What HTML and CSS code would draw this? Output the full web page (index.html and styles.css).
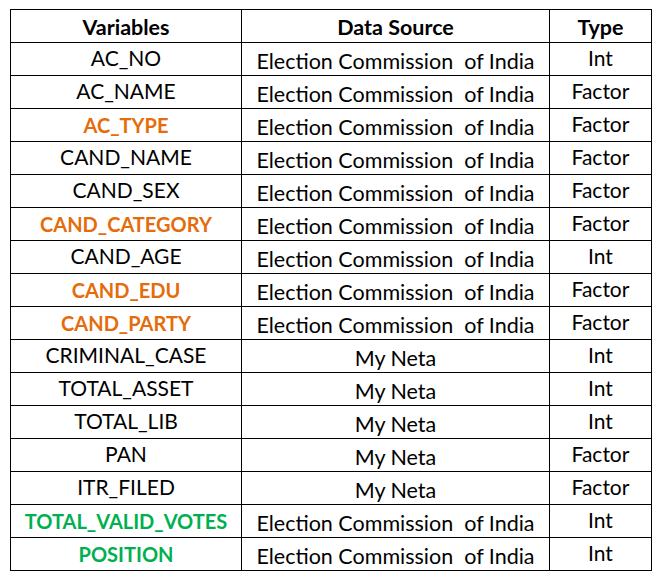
FILE: index.html
```html
<!DOCTYPE html>
<html>
<head>
<meta charset="utf-8">
<link rel="stylesheet" href="styles.css">
</head>
<body>
<div class="table">
  <div class="cell head c1">Variables</div><div class="cell head c2">Data Source</div><div class="cell head c3">Type</div>
  <div class="cell c1">AC_NO</div><div class="cell c2">Election Commission  of India</div><div class="cell c3">Int</div>
  <div class="cell c1">AC_NAME</div><div class="cell c2">Election Commission  of India</div><div class="cell c3">Factor</div>
  <div class="cell c1 orange">AC_TYPE</div><div class="cell c2">Election Commission  of India</div><div class="cell c3">Factor</div>
  <div class="cell c1">CAND_NAME</div><div class="cell c2">Election Commission  of India</div><div class="cell c3">Factor</div>
  <div class="cell c1">CAND_SEX</div><div class="cell c2">Election Commission  of India</div><div class="cell c3">Factor</div>
  <div class="cell c1 orange">CAND_CATEGORY</div><div class="cell c2">Election Commission  of India</div><div class="cell c3">Factor</div>
  <div class="cell c1">CAND_AGE</div><div class="cell c2">Election Commission  of India</div><div class="cell c3">Int</div>
  <div class="cell c1 orange">CAND_EDU</div><div class="cell c2">Election Commission  of India</div><div class="cell c3">Factor</div>
  <div class="cell c1 orange">CAND_PARTY</div><div class="cell c2">Election Commission  of India</div><div class="cell c3">Factor</div>
  <div class="cell c1">CRIMINAL_CASE</div><div class="cell c2">My Neta</div><div class="cell c3">Int</div>
  <div class="cell c1">TOTAL_ASSET</div><div class="cell c2">My Neta</div><div class="cell c3">Int</div>
  <div class="cell c1">TOTAL_LIB</div><div class="cell c2">My Neta</div><div class="cell c3">Int</div>
  <div class="cell c1">PAN</div><div class="cell c2">My Neta</div><div class="cell c3">Factor</div>
  <div class="cell c1">ITR_FILED</div><div class="cell c2">My Neta</div><div class="cell c3">Factor</div>
  <div class="cell c1 green">TOTAL_VALID_VOTES</div><div class="cell c2">Election Commission  of India</div><div class="cell c3">Int</div>
  <div class="cell c1 green">POSITION</div><div class="cell c2">Election Commission  of India</div><div class="cell c3">Int</div>
</div>
</body>
</html>
```
FILE: styles.css
```css
html, body {
  margin: 0;
  padding: 0;
  background: #ffffff;
}
body {
  font-family: Lato, "Liberation Sans", sans-serif;
  color: #000000;
}
.table {
  margin: 9px 0 0 10px;
  display: grid;
  grid-template-columns: 231px 308px 102px;
  grid-auto-rows: 33px;
  width: 641px;
  border-left: 1px solid #000;
  border-top: 1px solid #000;
}
.cell {
  box-sizing: border-box;
  border-right: 1px solid #000;
  border-bottom: 1px solid #000;
  font-size: 21px;
  line-height: 22px;
  text-align: center;
  white-space: pre;
  padding-top: 4px;
}
.cell.c2 {
  font-size: 21.5px;
  padding-top: 7px;
}
.cell.head {
  font-weight: bold;
  font-size: 21.5px;
  padding-top: 6px;
}
.orange {
  color: #E46C0A;
  font-weight: bold;
  font-size: 20px;
  padding-top: 5px;
}
.green {
  color: #00B050;
  font-weight: bold;
  font-size: 20px;
  padding-top: 5px;
}
```
